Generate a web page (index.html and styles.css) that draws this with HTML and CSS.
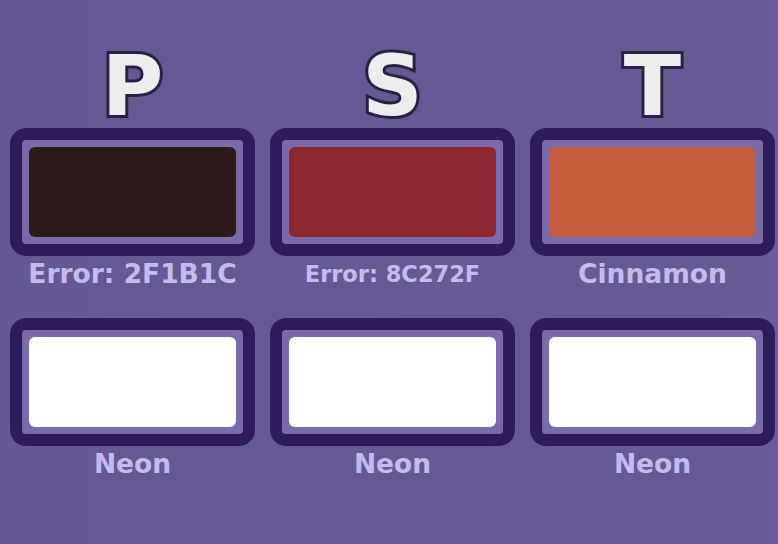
FILE: index.html
```html
<!DOCTYPE html>
<html>
<head>
<meta charset="utf-8">
<link rel="stylesheet" href="styles.css">
</head>
<body>
<div class="board">
  <div class="letter"><span class="glyph">P</span></div>
  <div class="letter"><span class="glyph">S</span></div>
  <div class="letter"><span class="glyph">T</span></div>

  <div class="card"><div class="swatch sw-dark"></div></div>
  <div class="card"><div class="swatch sw-red"></div></div>
  <div class="card"><div class="swatch sw-cinnamon"></div></div>

  <div class="label">Error: 2F1B1C</div>
  <div class="label label-small">Error: 8C272F</div>
  <div class="label">Cinnamon</div>

  <div class="card"><div class="swatch sw-white"></div></div>
  <div class="card"><div class="swatch sw-white"></div></div>
  <div class="card"><div class="swatch sw-white"></div></div>

  <div class="label">Neon</div>
  <div class="label">Neon</div>
  <div class="label">Neon</div>
</div>
</body>
</html>
```
FILE: styles.css
```css
html, body {
  margin: 0;
  padding: 0;
}
body {
  width: 778px;
  height: 544px;
  overflow: hidden;
  background: linear-gradient(90deg, #665893 0%, #675a94 90%, #6b5d97 100%);
  font-family: "DejaVu Sans", "Liberation Sans", sans-serif;
}
.board {
  display: grid;
  grid-template-columns: repeat(3, 245px);
  column-gap: 15px;
  padding-left: 10px;
}
.letter {
  height: 128px;
  box-sizing: border-box;
  padding-top: 44px;
  text-align: center;
  font-size: 84px;
  line-height: 84px;
  font-weight: 700;
}
.glyph {
  color: #ededee;
  -webkit-text-stroke: 6px #2a1f45;
  paint-order: stroke fill;
  text-shadow: 0 0 1px #2a1f45;
}
.card {
  height: 128px;
  box-sizing: border-box;
  border: 12px solid #2f1d5b;
  border-radius: 16px;
  background: #7a6aab;
  padding: 7px;
}
.swatch {
  height: 100%;
  border-radius: 6px;
}
.sw-dark { background: #2f1b1c; }
.sw-red { background: #8c272f; }
.sw-cinnamon { background: #c55c3b; }
.sw-white { background: #ffffff; }
.label {
  height: 36px;
  line-height: 36px;
  margin-bottom: 26px;
  text-align: center;
  font-size: 26.5px;
  font-weight: 700;
  color: #c5bbeb;
}
.label-small {
  font-size: 22.5px;
}
```
